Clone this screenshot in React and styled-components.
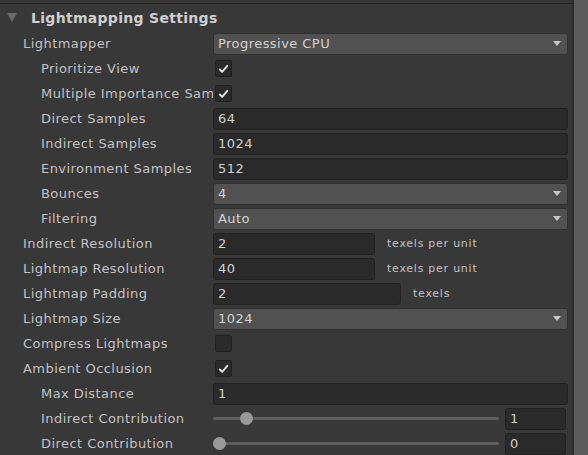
import React from "react";
import styled, { createGlobalStyle } from "styled-components";

const GlobalStyle = createGlobalStyle`
  html, body {
    margin: 0;
    padding: 0;
    background: #383838;
    overflow: hidden;
  }
  body {
    font-family: "DejaVu Sans", "Liberation Sans", sans-serif;
    font-size: 13px;
    color: #c2c2c2;
  }
`;

const Page = styled.div`
  display: flex;
  width: 588px;
  height: 455px;
  overflow: hidden;
`;

const Panel = styled.div`
  flex: 1;
  padding-top: 3px;
  border-right: 2px solid #2b2b2b;
`;

const Scrollbar = styled.div`
  width: 14px;
  background: #5c5c5c;
`;

const TopRule = styled.div`
  height: 1px;
  background: #242424;
`;

const Header = styled.div`
  display: flex;
  align-items: center;
  height: 27px;
  padding-left: 7px;
  gap: 14px;
  font-weight: bold;
  font-size: 14px;
  letter-spacing: 0.3px;
  color: #cfcfcf;
`;

const Foldout = styled.span`
  width: 0;
  height: 0;
  border-left: 5px solid transparent;
  border-right: 5px solid transparent;
  border-top: 9px solid #6b6b6b;
`;

const Row = styled.div`
  display: flex;
  align-items: center;
  height: 25px;
  padding-right: 4px;
`;

const Label = styled.div`
  width: 213px;
  box-sizing: border-box;
  padding-left: ${(p) => (p.$nested ? 41 : 23)}px;
  padding-right: 3px;
  white-space: nowrap;
  overflow: hidden;
  letter-spacing: 0.45px;
  flex-shrink: 0;
`;

const Control = styled.div`
  flex: 1;
  display: flex;
  align-items: center;
  min-width: 0;
`;

const TextField = styled.div`
  box-sizing: border-box;
  height: 22px;
  width: ${(p) => (p.$width ? `${p.$width}px` : "100%")};
  flex-shrink: 0;
  display: flex;
  align-items: center;
  padding-left: 4px;
  background: #2a2a2a;
  border: 1px solid #212121;
  border-radius: 3px;
  letter-spacing: 0.45px;
  color: #d0d0d0;
`;

const Dropdown = styled.div`
  box-sizing: border-box;
  height: 22px;
  width: 100%;
  display: flex;
  align-items: center;
  justify-content: space-between;
  padding: 0 6px 0 4px;
  background: #515151;
  border: 1px solid #303030;
  border-radius: 3px;
  letter-spacing: 0.45px;
  color: #d2d2d2;
`;

const Arrow = styled.span`
  width: 0;
  height: 0;
  border-left: 4px solid transparent;
  border-right: 4px solid transparent;
  border-top: 5px solid #c8c8c8;
`;

const Unit = styled.span`
  margin-left: 12px;
  font-size: 11px;
  letter-spacing: 0.75px;
  color: #c2c2c2;
`;

const Box = styled.div`
  box-sizing: border-box;
  width: 17px;
  height: 17px;
  margin-left: 2px;
  display: flex;
  align-items: center;
  justify-content: center;
  background: #2a2a2a;
  border: 1px solid #202020;
  border-radius: 2px;
`;

const SliderWrap = styled.div`
  flex: 1;
  display: flex;
  align-items: center;
  gap: 6px;
`;

const Track = styled.div`
  position: relative;
  flex: 1;
  height: 3px;
  background: #5e5e5e;
  border-radius: 2px;
`;

const Thumb = styled.span`
  position: absolute;
  top: 50%;
  width: 13px;
  height: 13px;
  margin: -6.5px 0 0 -6.5px;
  border-radius: 50%;
  background: #999999;
`;

const NumberField = styled(TextField)`
  width: 61px;
  margin-right: 2px;
`;

const Check = () => (
  <svg width="11" height="10" viewBox="0 0 11 10">
    <path d="M1.8 5.5 L4.2 7.8 L9.3 1.8" fill="none" stroke="#e2e2e2" strokeWidth="1.9" strokeLinecap="round" strokeLinejoin="round" />
  </svg>
);

const Checkbox = ({ checked }) => <Box>{checked && <Check />}</Box>;

const Slider = ({ value, max }) => (
  <SliderWrap>
    <Track>
      <Thumb style={{ left: `calc(6.5px + (100% - 13px) * ${value / max})` }} />
    </Track>
    <NumberField>{value}</NumberField>
  </SliderWrap>
);

const rows = [
  { label: "Lightmapper", type: "dropdown", value: "Progressive CPU" },
  { label: "Prioritize View", nested: true, type: "check", value: true },
  { label: "Multiple Importance Sampling", nested: true, type: "check", value: true },
  { label: "Direct Samples", nested: true, type: "text", value: "64" },
  { label: "Indirect Samples", nested: true, type: "text", value: "1024" },
  { label: "Environment Samples", nested: true, type: "text", value: "512" },
  { label: "Bounces", nested: true, type: "dropdown", value: "4" },
  { label: "Filtering", nested: true, type: "dropdown", value: "Auto" },
  { label: "Indirect Resolution", type: "text", value: "2", width: 162, unit: "texels per unit" },
  { label: "Lightmap Resolution", type: "text", value: "40", width: 162, unit: "texels per unit" },
  { label: "Lightmap Padding", type: "text", value: "2", width: 188, unit: "texels" },
  { label: "Lightmap Size", type: "dropdown", value: "1024" },
  { label: "Compress Lightmaps", type: "check", value: false },
  { label: "Ambient Occlusion", type: "check", value: true },
  { label: "Max Distance", nested: true, type: "text", value: "1" },
  { label: "Indirect Contribution", nested: true, type: "slider", value: 1, max: 10 },
  { label: "Direct Contribution", nested: true, type: "slider", value: 0, max: 10 },
];

const renderControl = (row) => {
  switch (row.type) {
    case "dropdown":
      return (
        <Dropdown>
          {row.value}
          <Arrow />
        </Dropdown>
      );
    case "check":
      return <Checkbox checked={row.value} />;
    case "slider":
      return <Slider value={row.value} max={row.max} />;
    default:
      return (
        <>
          <TextField $width={row.width}>{row.value}</TextField>
          {row.unit && <Unit>{row.unit}</Unit>}
        </>
      );
  }
};

const App = () => (
  <Page>
    <GlobalStyle />
    <Panel>
      <TopRule />
      <Header>
        <Foldout />
        Lightmapping Settings
      </Header>
      {rows.map((row) => (
        <Row key={row.label}>
          <Label $nested={row.nested}>{row.label}</Label>
          <Control>{renderControl(row)}</Control>
        </Row>
      ))}
    </Panel>
    <Scrollbar />
  </Page>
);

export default App;
